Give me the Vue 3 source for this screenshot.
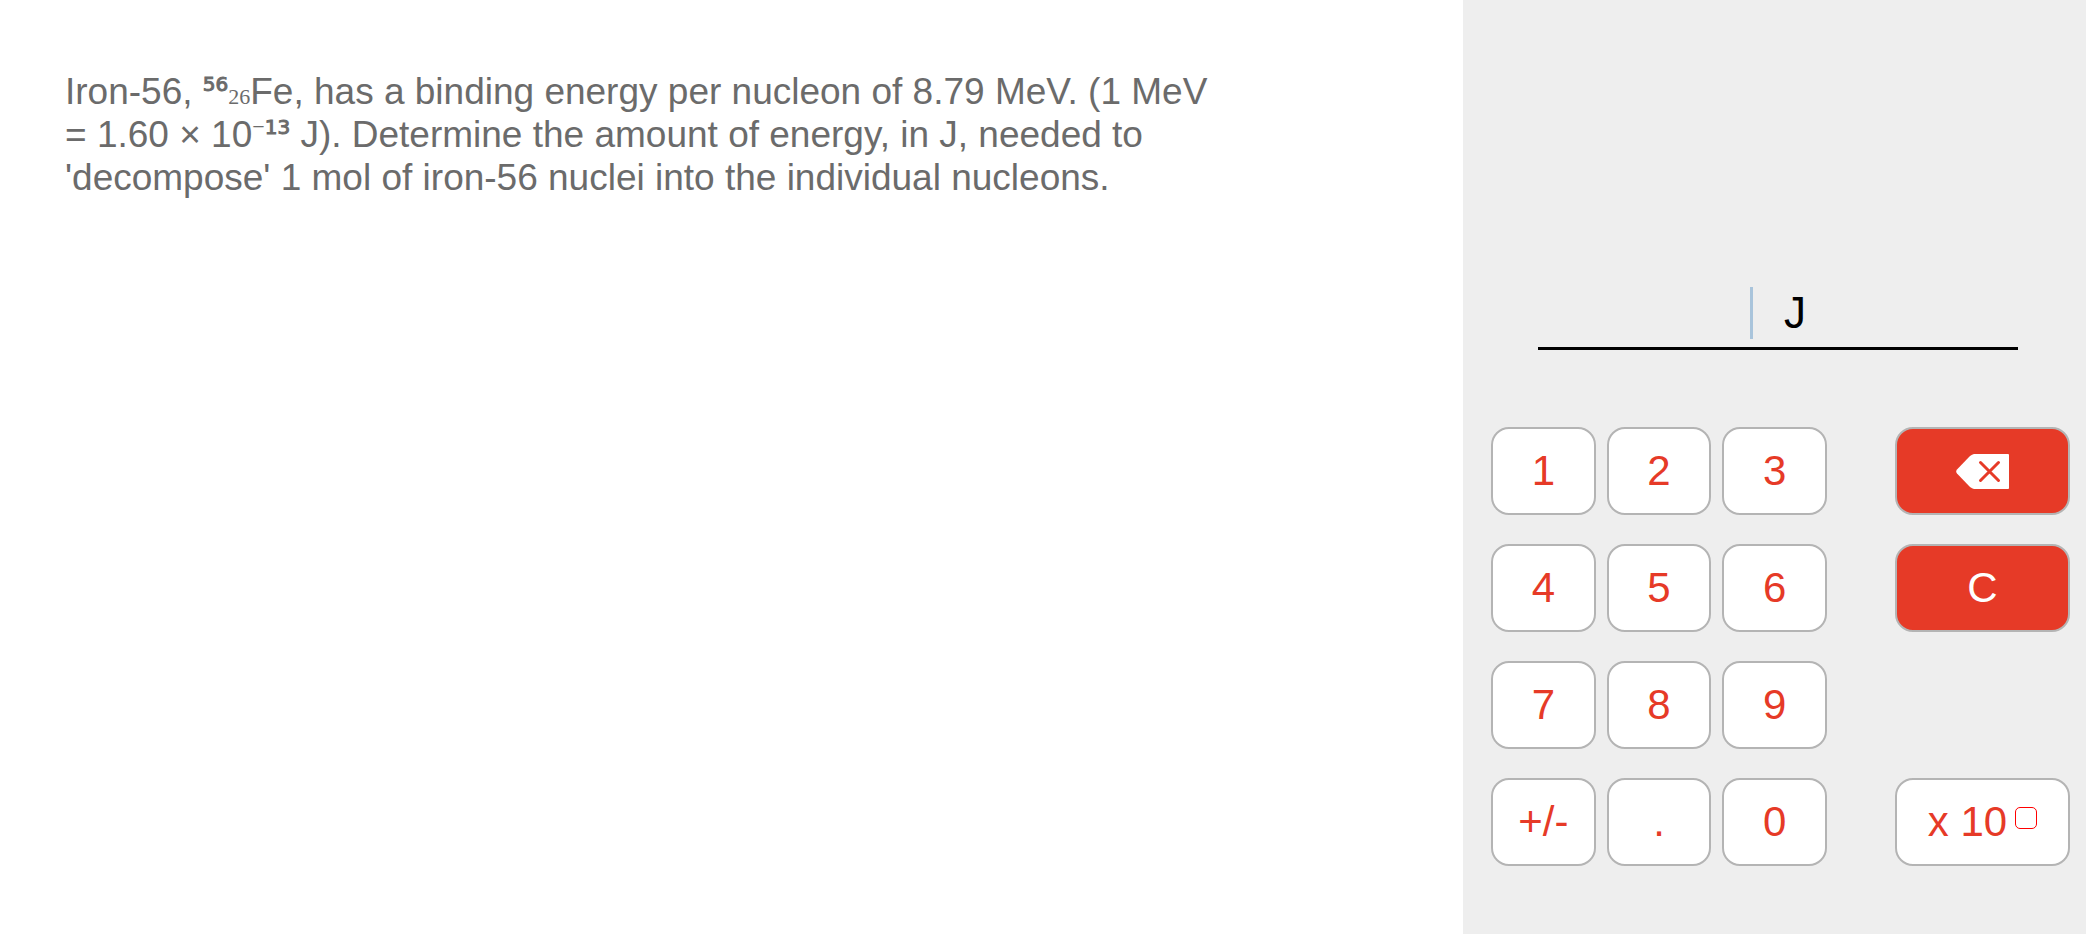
<script setup>
import { ref } from 'vue'

const value = ref('')
const keys = ['1', '2', '3', '4', '5', '6', '7', '8', '9', '+/-', '.', '0']

function press(key) {
  if (key === '+/-') {
    value.value = value.value.startsWith('-') ? value.value.slice(1) : '-' + value.value
  } else {
    value.value += key
  }
}
</script>

<template>
  <main class="exercise">
    <section class="question">
      <p>
        Iron-56, <sup>56</sup><sub>26</sub>Fe, has a binding energy per nucleon of 8.79 MeV. (1 MeV = 1.60 × 10<sup><span class="minus">−</span>13</sup> J). Determine the amount of energy, in J, needed to 'decompose' 1 mol of iron-56 nuclei into the individual nucleons.
      </p>
    </section>

    <section class="panel">
      <div class="answer" role="status" aria-label="Answer in joules">
        <span>{{ value }}</span><span class="caret"></span><span class="unit">J</span>
      </div>

      <div class="keypad">
        <div class="digits">
          <button v-for="key in keys" :key="key" type="button" class="key" @click="press(key)">{{ key }}</button>
        </div>
        <div class="actions">
          <button type="button" class="key red" aria-label="Delete" @click="value = value.slice(0, -1)">
            <svg class="delete" viewBox="0 0 53 35" aria-hidden="true">
              <path class="tag" d="M18 0H52Q53 0 53 1V34Q53 35 52 35H18Q16 34.500 14 33L1 19.500Q-.6 17.500 1 15.500L14 2Q16 .4 18 0Z" />
              <path class="cross" d="M24.500 8.500L42.500 26.500M42.500 8.500L24.500 26.500" />
            </svg>
          </button>
          <button type="button" class="key red" @click="value = ''">C</button>
          <button type="button" class="key power" @click="value += 'e'">x 10<span class="exponent"></span></button>
        </div>
      </div>
    </section>
  </main>
</template>

<style>
body {
  margin: 0;
}
</style>

<style scoped>
.exercise {
  display: grid;
  grid-template-columns: 1463fr 623fr;
  min-height: 100vh;
  background: #fff;
  font-family: "Liberation Sans", Arial, sans-serif;
}

.question {
  padding: 70px 16% 40px 65px;
  color: #6b6b6b;
}

.question p {
  margin: 0;
  font-size: 37px;
  line-height: 43px;
}

sup,
sub {
  line-height: 1;
}

sup {
  font-family: "DejaVu Sans", sans-serif;
  font-size: 20px;
  vertical-align: 13px;
  -webkit-text-stroke: 1px currentColor;
}

sub {
  font-family: "Liberation Serif", serif;
  font-size: 22px;
  vertical-align: baseline;
}

.minus {
  font-family: "Liberation Serif", serif;
  font-size: 22px;
  -webkit-text-stroke: 0;
}

.panel {
  background: #eee;
  padding: 282px 16px 40px 28px;
}

.answer {
  display: flex;
  align-items: center;
  justify-content: center;
  height: 61px;
  margin: 0 52px 0 47px;
  padding-bottom: 4px;
  border-bottom: 3px solid #000;
  font-size: 44px;
}

.caret {
  width: 3px;
  height: 52px;
  margin-right: 31px;
  background: #a9c4db;
}

.keypad {
  display: grid;
  grid-template-columns: 336fr 175fr;
  column-gap: 68px;
  margin-top: 77px;
}

.digits,
.actions {
  display: grid;
  grid-template-rows: repeat(4, 88px);
  gap: 29px 11px;
}

.digits {
  grid-template-columns: repeat(3, 1fr);
}

.key {
  display: flex;
  align-items: center;
  justify-content: center;
  padding: 0;
  border: 2px solid #b4b4b4;
  border-radius: 18px;
  background: #fff;
  color: #e63a27;
  font-family: inherit;
  font-size: 42px;
  cursor: pointer;
}

.red {
  background: #e63a27;
  color: #fff;
}

.power {
  grid-row: 4;
}

.exponent {
  width: 20px;
  height: 20px;
  margin: 0 0 8px 8px;
  border: 1px solid #f00;
  border-radius: 5px;
}

.delete {
  width: 53px;
  height: 35px;
}

.tag {
  fill: #fff;
}

.cross {
  fill: none;
  stroke: #e63a27;
  stroke-width: 3;
  stroke-linecap: round;
}
</style>
